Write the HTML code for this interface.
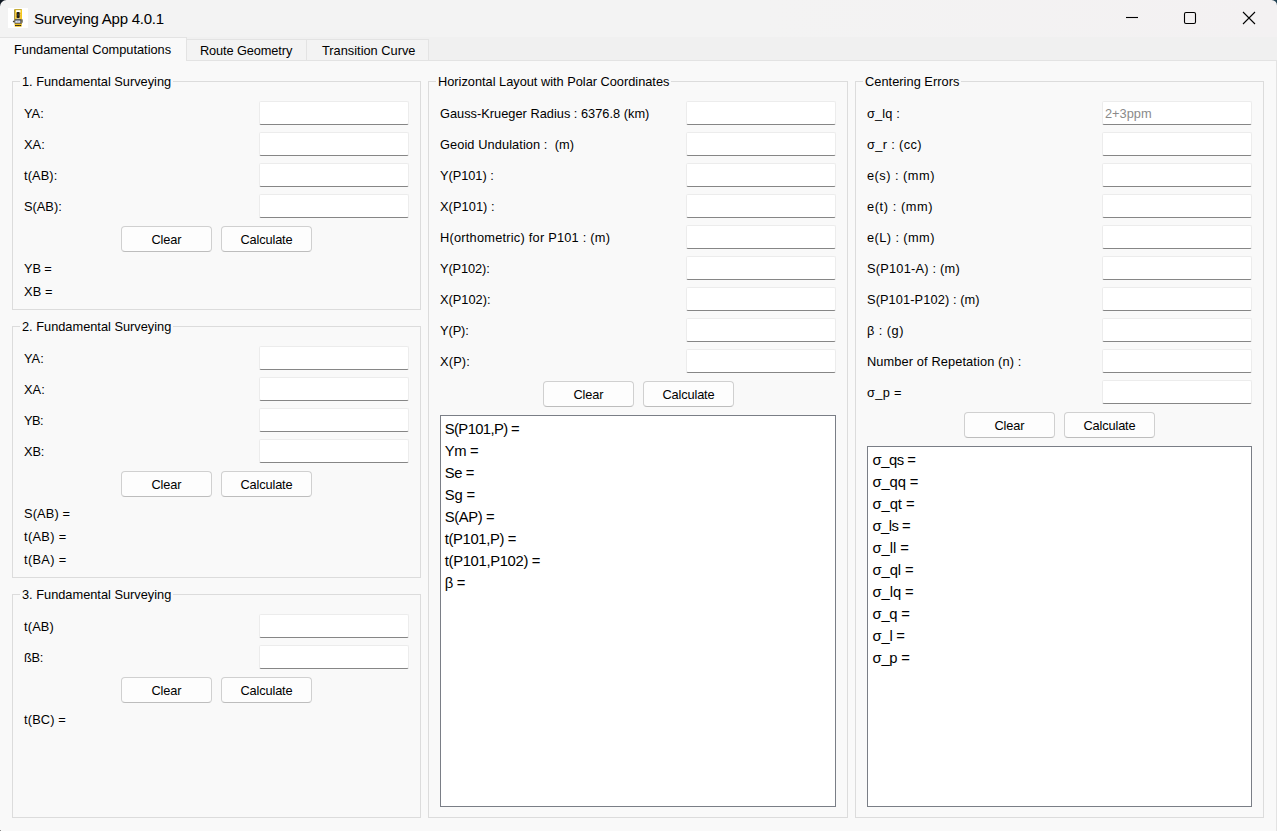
<!DOCTYPE html>
<html><head><meta charset="utf-8"><title>Surveying App 4.0.1</title>
<style>
html,body{margin:0;padding:0;}
body{width:1277px;height:831px;overflow:hidden;background:#f9f9f9;font-family:"Liberation Sans",sans-serif;font-size:12.8px;color:#000;position:relative;}
.abs{position:absolute;}
.titlebar{position:absolute;left:0;top:0;width:1277px;height:37px;background:linear-gradient(90deg,#f3f3f3 0%,#f3f3f3 60%,#f3f1f2 100%);}
.tabbar{position:absolute;left:0;top:37px;width:1277px;height:23px;background:#f0f0f0;}
.paneline{position:absolute;left:0;top:60px;width:1277px;height:1px;background:#e3e3e3;}
.paneright{position:absolute;left:1276px;top:60px;width:1px;height:771px;background:#e3e3e3;}
.tab{position:absolute;box-sizing:border-box;background:#f3f3f3;border:1px solid #e3e3e3;border-bottom:none;border-left:none;white-space:nowrap;}
.tab.sel{background:#f9f9f9;}
.t{position:absolute;white-space:nowrap;line-height:16px;height:16px;}
.gb{position:absolute;box-sizing:border-box;border:1px solid #dcdcdc;}
.gt{position:absolute;white-space:nowrap;line-height:16px;height:16px;background:#f9f9f9;padding:0 2px 0 2px;}
.in{position:absolute;box-sizing:border-box;width:150px;height:24px;background:#fff;border:1px solid #ececec;border-bottom:1px solid #868686;border-radius:2px;}
.btn{position:absolute;box-sizing:border-box;width:91px;height:26px;background:#fdfdfd;border:1px solid #d0d0d0;border-bottom-color:#bdbdbd;border-radius:4px;text-align:center;line-height:25px;white-space:nowrap;}
.ta{position:absolute;box-sizing:border-box;background:#fff;border:1px solid #7a7e86;}
.tl{position:absolute;white-space:nowrap;font-size:14.8px;line-height:22px;height:22px;left:3.8px;}
.ph{position:absolute;left:2px;top:4px;color:#8a8a8a;line-height:16px;white-space:nowrap;}
</style></head>
<body>
<div class="titlebar"></div>
<div class="tabbar"></div>
<svg class="abs" style="left:0;top:0" width="10" height="10"><path d="M0 0H6.5A6.5 6.5 0 0 0 0 6.5Z" fill="#0f1822"/></svg>
<svg class="abs" style="left:1267px;top:0" width="10" height="10"><path d="M10 0H4.5A5.5 5.5 0 0 1 10 5.5Z" fill="#1f4052"/></svg>
<svg class="abs" style="left:8px;top:8px" width="20" height="20" viewBox="0 0 20 20">
<rect width="20" height="20" fill="#fff"/>
<rect x="6.4" y="0.9" width="7.6" height="14.4" rx="1" fill="#f3c91e"/>
<rect x="6.6" y="0.9" width="7.2" height="0.9" rx="0.4" fill="#b7a340"/>
<rect x="6.2" y="1.6" width="0.8" height="13" fill="#8f8448"/>
<rect x="7.3" y="4.6" width="0.5" height="5.4" fill="#fbe9a0"/>
<rect x="12.4" y="4.6" width="0.5" height="5.4" fill="#fbe9a0"/>
<rect x="8.1" y="2.2" width="4.4" height="2.2" fill="#fff"/>
<rect x="8.6" y="4" width="3.1" height="6" rx="0.9" fill="#1e1e1e"/>
<rect x="9.4" y="6" width="1.4" height="1.6" rx="0.6" fill="#3b4a5a"/>
<path d="M7.4 5.2L8.6 5.8M7.4 7L8.6 7.6M7.4 8.8L8.6 9.4M12.9 5.2L11.7 5.8M12.9 7L11.7 7.6M12.9 8.8L11.7 9.4" stroke="#e39a12" stroke-width="0.8" fill="none"/>
<rect x="8.2" y="10.2" width="4" height="2.4" fill="#c9c6b0"/>
<rect x="6.7" y="11.6" width="6.9" height="3.7" rx="0.8" fill="#62656e"/>
<rect x="6.9" y="11.4" width="6.6" height="1" fill="#3c3c40"/>
<rect x="7.3" y="12.6" width="4.9" height="2.1" fill="#dfe5f4"/>
<rect x="9" y="12.5" width="0.6" height="2.2" fill="#a8aec0"/>
<rect x="10.6" y="12.5" width="0.6" height="2.2" fill="#a8aec0"/>
<rect x="4.9" y="12.7" width="1.6" height="1.5" rx="0.5" fill="#3a3a3a"/>
<rect x="13.5" y="11.3" width="1.2" height="3.4" rx="0.5" fill="#5a5a5a"/>
<rect x="6.6" y="15" width="7.2" height="0.8" fill="#4a3c20"/>
<rect x="6.7" y="15.7" width="6.9" height="3.1" rx="0.5" fill="#f2c21c"/>
<rect x="7" y="16.9" width="6.2" height="1.2" rx="0.3" fill="#2a2416"/>
<rect x="8.6" y="17.1" width="0.7" height="0.8" fill="#8a7420"/>
<rect x="10.8" y="17.1" width="0.7" height="0.8" fill="#8a7420"/>
</svg>
<div class="t" style="left:34px;top:9px;font-size:15px;letter-spacing:-0.23px;line-height:20px;height:20px;">Surveying App 4.0.1</div>
<svg class="abs" style="left:1120px;top:6px" width="150" height="24" viewBox="0 0 150 24" fill="none" stroke="#000" stroke-width="1.1">
<path d="M6 11.5H18"/>
<rect x="64.5" y="6.5" width="11" height="11" rx="1.5"/>
<path d="M123 6L135 18M135 6L123 18"/>
</svg>
<div class="tab sel" style="left:0;top:37px;width:187px;height:23px;"><div class="t" style="left:14px;top:4px;letter-spacing:-0.005px;">Fundamental Computations</div></div>
<div class="paneline"></div>
<div class="tab" style="left:187px;top:39px;width:120px;height:21px;"><div class="t" style="left:13px;top:3px;letter-spacing:-0.121px;">Route Geometry</div></div>
<div class="tab" style="left:307px;top:39px;width:122px;height:21px;"><div class="t" style="left:15px;top:3px;letter-spacing:-0.0px;">Transition Curve</div></div>
<div class="abs" style="left:0;top:60px;width:186px;height:1px;background:#f9f9f9"></div>
<div class="paneright"></div>
<div class="abs" style="left:0;top:830px;width:1px;height:1px;background:#8e8e8e"></div>
<div class="gb" style="left:12px;top:81px;width:409px;height:229px;"></div>
<div class="gt" style="left:20px;top:74px;letter-spacing:-0.012px;">1. Fundamental Surveying</div>
<div class="t" style="left:24px;top:106px;letter-spacing:0.004px;">YA:</div>
<div class="in" style="left:259px;top:101px;"></div>
<div class="t" style="left:24px;top:137px;letter-spacing:0.086px;">XA:</div>
<div class="in" style="left:259px;top:132px;"></div>
<div class="t" style="left:24px;top:168px;letter-spacing:0.114px;">t(AB):</div>
<div class="in" style="left:259px;top:163px;"></div>
<div class="t" style="left:24px;top:199px;letter-spacing:0.002px;">S(AB):</div>
<div class="in" style="left:259px;top:194px;"></div>
<div class="btn" style="left:121px;top:226px;letter-spacing:-0.119px;">Clear</div>
<div class="btn" style="left:221px;top:226px;letter-spacing:-0.151px;">Calculate</div>
<div class="t" style="left:24px;top:261px;letter-spacing:-0.102px;">YB =</div>
<div class="t" style="left:24px;top:284px;letter-spacing:0.123px;">XB =</div>
<div class="gb" style="left:12px;top:326px;width:409px;height:252px;"></div>
<div class="gt" style="left:20px;top:319px;letter-spacing:-0.004px;">2. Fundamental Surveying</div>
<div class="t" style="left:24px;top:351px;letter-spacing:0.004px;">YA:</div>
<div class="in" style="left:259px;top:346px;"></div>
<div class="t" style="left:24px;top:382px;letter-spacing:0.086px;">XA:</div>
<div class="in" style="left:259px;top:377px;"></div>
<div class="t" style="left:24px;top:413px;letter-spacing:-0.514px;">YB:</div>
<div class="in" style="left:259px;top:408px;"></div>
<div class="t" style="left:24px;top:444px;letter-spacing:-0.147px;">XB:</div>
<div class="in" style="left:259px;top:439px;"></div>
<div class="btn" style="left:121px;top:471px;letter-spacing:-0.119px;">Clear</div>
<div class="btn" style="left:221px;top:471px;letter-spacing:-0.151px;">Calculate</div>
<div class="t" style="left:24px;top:506px;letter-spacing:0.147px;">S(AB) =</div>
<div class="t" style="left:24px;top:529px;letter-spacing:0.33px;">t(AB) =</div>
<div class="t" style="left:24px;top:552px;letter-spacing:0.33px;">t(BA) =</div>
<div class="gb" style="left:12px;top:594px;width:409px;height:224px;"></div>
<div class="gt" style="left:20px;top:587px;letter-spacing:-0.004px;">3. Fundamental Surveying</div>
<div class="t" style="left:24px;top:619px;letter-spacing:0.169px;">t(AB)</div>
<div class="in" style="left:259px;top:614px;"></div>
<div class="t" style="left:24px;top:650px;letter-spacing:-0.307px;">ßB:</div>
<div class="in" style="left:259px;top:645px;"></div>
<div class="btn" style="left:121px;top:677px;letter-spacing:-0.119px;">Clear</div>
<div class="btn" style="left:221px;top:677px;letter-spacing:-0.151px;">Calculate</div>
<div class="t" style="left:24px;top:712px;letter-spacing:0.158px;">t(BC) =</div>
<div class="gb" style="left:428px;top:81px;width:420px;height:737px;"></div>
<div class="gt" style="left:436px;top:74px;letter-spacing:-0.012px;">Horizontal Layout with Polar Coordinates</div>
<div class="t" style="left:440px;top:106px;letter-spacing:0.006px;">Gauss-Krueger Radius : 6376.8 (km)</div>
<div class="in" style="left:686px;top:101px;"></div>
<div class="t" style="left:440px;top:137px;letter-spacing:0.083px;">Geoid Undulation :&nbsp; (m)</div>
<div class="in" style="left:686px;top:132px;"></div>
<div class="t" style="left:440px;top:168px;letter-spacing:-0.04px;">Y(P101) :</div>
<div class="in" style="left:686px;top:163px;"></div>
<div class="t" style="left:440px;top:199px;letter-spacing:0.071px;">X(P101) :</div>
<div class="in" style="left:686px;top:194px;"></div>
<div class="t" style="left:440px;top:230px;letter-spacing:0.229px;">H(orthometric) for P101 : (m)</div>
<div class="in" style="left:686px;top:225px;"></div>
<div class="t" style="left:440px;top:261px;letter-spacing:-0.114px;">Y(P102):</div>
<div class="in" style="left:686px;top:256px;"></div>
<div class="t" style="left:440px;top:292px;letter-spacing:0.011px;">X(P102):</div>
<div class="in" style="left:686px;top:287px;"></div>
<div class="t" style="left:440px;top:323px;letter-spacing:-0.071px;">Y(P):</div>
<div class="in" style="left:686px;top:318px;"></div>
<div class="t" style="left:440px;top:354px;letter-spacing:0.169px;">X(P):</div>
<div class="in" style="left:686px;top:349px;"></div>
<div class="btn" style="left:543px;top:381px;letter-spacing:-0.119px;">Clear</div>
<div class="btn" style="left:643px;top:381px;letter-spacing:-0.151px;">Calculate</div>
<div class="ta" style="left:440px;top:415px;width:396px;height:392px;">
<div class="tl" style="top:2px;letter-spacing:-0.611px;">S(P101,P) =</div>
<div class="tl" style="top:24px;letter-spacing:-0.388px;">Ym =</div>
<div class="tl" style="top:46px;letter-spacing:-0.39px;">Se =</div>
<div class="tl" style="top:68px;letter-spacing:-0.165px;">Sg =</div>
<div class="tl" style="top:90px;letter-spacing:-0.403px;">S(AP) =</div>
<div class="tl" style="top:112px;letter-spacing:-0.361px;">t(P101,P) =</div>
<div class="tl" style="top:134px;letter-spacing:-0.332px;">t(P101,P102) =</div>
<div class="tl" style="top:156px;letter-spacing:-0.289px;">β =</div>
</div>
<div class="gb" style="left:855px;top:81px;width:409px;height:737px;"></div>
<div class="gt" style="left:863px;top:74px;letter-spacing:0.032px;">Centering Errors</div>
<div class="t" style="left:867px;top:106px;letter-spacing:0.134px;">σ_lq :</div>
<div class="in" style="left:1102px;top:101px;"><div class="ph">2+3ppm</div></div>
<div class="t" style="left:867px;top:137px;letter-spacing:0.363px;">σ_r : (cc)</div>
<div class="in" style="left:1102px;top:132px;"></div>
<div class="t" style="left:867px;top:168px;letter-spacing:0.485px;">e(s) : (mm)</div>
<div class="in" style="left:1102px;top:163px;"></div>
<div class="t" style="left:867px;top:199px;letter-spacing:0.58px;">e(t) : (mm)</div>
<div class="in" style="left:1102px;top:194px;"></div>
<div class="t" style="left:867px;top:230px;letter-spacing:0.42px;">e(L) : (mm)</div>
<div class="in" style="left:1102px;top:225px;"></div>
<div class="t" style="left:867px;top:261px;letter-spacing:0.22px;">S(P101-A) : (m)</div>
<div class="in" style="left:1102px;top:256px;"></div>
<div class="t" style="left:867px;top:292px;letter-spacing:0.097px;">S(P101-P102) : (m)</div>
<div class="in" style="left:1102px;top:287px;"></div>
<div class="t" style="left:867px;top:323px;letter-spacing:0.461px;">β : (g)</div>
<div class="in" style="left:1102px;top:318px;"></div>
<div class="t" style="left:867px;top:354px;letter-spacing:0.111px;">Number of Repetation (n) :</div>
<div class="in" style="left:1102px;top:349px;"></div>
<div class="t" style="left:867px;top:385px;letter-spacing:0.346px;">σ_p =</div>
<div class="in" style="left:1102px;top:380px;"></div>
<div class="btn" style="left:964px;top:412px;letter-spacing:-0.119px;">Clear</div>
<div class="btn" style="left:1064px;top:412px;letter-spacing:-0.151px;">Calculate</div>
<div class="ta" style="left:867px;top:446px;width:385px;height:361px;">
<div class="tl" style="left:4.5px;top:2px;letter-spacing:-0.475px;">σ_qs =</div>
<div class="tl" style="left:4.5px;top:24px;letter-spacing:-0.13px;">σ_qq =</div>
<div class="tl" style="left:4.5px;top:46px;letter-spacing:-0.078px;">σ_qt =</div>
<div class="tl" style="left:4.5px;top:68px;letter-spacing:-0.519px;">σ_ls =</div>
<div class="tl" style="left:4.5px;top:90px;letter-spacing:-0.084px;">σ_ll =</div>
<div class="tl" style="left:4.5px;top:112px;letter-spacing:-0.073px;">σ_ql =</div>
<div class="tl" style="left:4.5px;top:134px;letter-spacing:-0.073px;">σ_lq =</div>
<div class="tl" style="left:4.5px;top:156px;letter-spacing:-0.249px;">σ_q =</div>
<div class="tl" style="left:4.5px;top:178px;letter-spacing:-0.241px;">σ_l =</div>
<div class="tl" style="left:4.5px;top:200px;letter-spacing:-0.249px;">σ_p =</div>
</div>
</body></html>
